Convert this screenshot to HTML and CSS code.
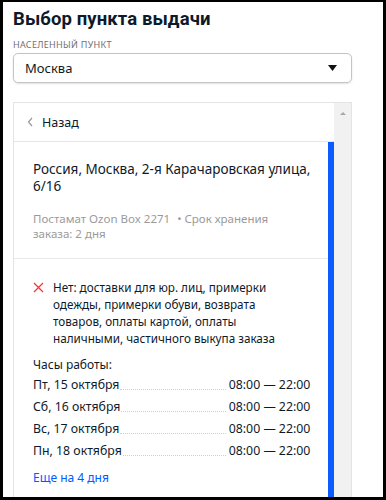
FILE: index.html
```html
<!DOCTYPE html>
<html lang="ru">
<head>
    <meta charset="UTF-8">
    <meta name="viewport" content="width=device-width, initial-scale=1.0">
    <title>Выбор пункта выдачи</title>
    <link rel="stylesheet" href="styles.css">
</head>
<body>
    <div class="page">
        <h1 class="title">Выбор пункта выдачи</h1>
        <div class="field-label">Населенный пункт</div>
        <div class="select">
            <span>Москва</span>
            <svg class="caret" width="9" height="6" viewBox="0 0 9 6"><path d="M0 0h9L4.5 6z" fill="#111"/></svg>
        </div>

        <div class="panel">
            <div class="panel-main">
                <div class="back">
                    <svg width="6" height="10" viewBox="0 0 6 10"><path d="M5 1L1.5 5 5 9" fill="none" stroke="#9a9a9a" stroke-width="1.2"/></svg>
                    <span>Назад</span>
                </div>

                <div class="section address">
                    <div class="addr">Россия, Москва, 2-я Карачаровская улица,<br>6/16</div>
                    <div class="meta">Постамат Ozon Box 2271 <span class="dot">•</span> Срок хранения<br>заказа: 2 дня</div>
                </div>

                <div class="section info">
                    <div class="no">
                        <svg width="11" height="11" viewBox="0 0 11 11"><path d="M1 1l9 9M10 1l-9 9" stroke="#f1373a" stroke-width="1.3"/></svg>
                        <p>Нет: доставки для юр. лиц, примерки<br>одежды, примерки обуви, возврата<br>товаров, оплаты картой, оплаты<br>наличными, частичного выкупа заказа</p>
                    </div>
                    <div class="hours-title">Часы работы:</div>
                    <div class="hours">
                        <div class="row"><span>Пт, 15 октября</span><i class="leader"></i><span>08:00 — 22:00</span></div>
                        <div class="row"><span>Сб, 16 октября</span><i class="leader"></i><span>08:00 — 22:00</span></div>
                        <div class="row"><span>Вс, 17 октября</span><i class="leader"></i><span>08:00 — 22:00</span></div>
                        <div class="row"><span>Пн, 18 октября</span><i class="leader"></i><span>08:00 — 22:00</span></div>
                    </div>
                    <a class="more" href="#">Еще на 4 дня</a>
                </div>
            </div>
            <div class="track"><span class="arrow"></span></div>
            <div class="thumb"></div>
        </div>
    </div>
</body>
</html>
```

FILE: styles.css
```css
html, body {
    margin: 0;
    height: 100%;
}
body {
    background: #000;
    padding: 2px 3px 3px 3px;
    box-sizing: border-box;
    font-family: 'Noto Sans', sans-serif;
    color: #0d1a2a;
}
.page {
    background: #fff;
    height: 100%;
    padding: 4px 0 0 10px;
    box-sizing: border-box;
    overflow: hidden;
}
.title {
    margin: 0;
    font-family: Roboto, sans-serif;
    font-size: 18.5px;
    line-height: 26px;
    font-weight: 700;
    letter-spacing: 0.1px;
}
.field-label {
    margin-top: 7px;
    font-size: 9px;
    line-height: 12px;
    text-transform: uppercase;
    letter-spacing: 0.3px;
    color: #707070;
}
.select {
    margin-top: 2px;
    width: 339px;
    height: 30px;
    box-sizing: border-box;
    border: 1px solid #c4c4c4;
    border-radius: 5px;
    box-shadow: 0 1px 2px rgba(0,0,0,0.12);
    display: flex;
    align-items: center;
    justify-content: space-between;
    padding: 0 14px 0 11px;
    font-size: 13px;
}
.panel {
    position: relative;
    margin-top: 19px;
    width: 339px;
    height: 400px;
    box-sizing: border-box;
    border: 1px solid #e4e4e4;
    display: flex;
}
.panel-main {
    flex: 1;
}
.back {
    height: 38px;
    display: flex;
    align-items: center;
    gap: 9px;
    padding-left: 13px;
    border-bottom: 1px solid #e4e4e4;
    font-size: 12.5px;
}
.section {
    padding: 0 24px 0 19px;
    white-space: nowrap;
}
.address {
    padding-top: 19px;
    padding-bottom: 17px;
    border-bottom: 1px solid #e8e8e8;
}
.addr {
    font-size: 13.5px;
    line-height: 17px;
}
.meta {
    margin-top: 16px;
    font-size: 11.5px;
    line-height: 15px;
    color: #9a9a9a;
}
.dot {
    margin-left: 4px;
}
.info {
    padding-top: 20px;
    font-size: 12px;
    line-height: 17px;
}
.no {
    display: flex;
    gap: 9px;
}
.no svg {
    margin-top: 3px;
    flex: none;
}
.no p {
    margin: 0;
    font-size: 11.7px;
}
.hours-title {
    margin-top: 9px;
}
.hours {
    margin-top: 1px;
}
.row {
    display: flex;
    align-items: flex-end;
    line-height: 22px;
    font-size: 12.3px;
}
.leader {
    flex: 1;
    border-bottom: 1px dotted #d0d0d0;
    margin: 0 3px 6px 1px;
}
.more {
    display: block;
    margin-top: 7px;
    color: #005bff;
    text-decoration: none;
}
.track {
    width: 19px;
    background: #f1f1f1;
    display: flex;
    justify-content: center;
}
.arrow {
    margin-top: 9px;
    width: 0;
    height: 0;
    border-left: 3px solid transparent;
    border-right: 3px solid transparent;
    border-bottom: 3px solid #a8a8a8;
}
.thumb {
    position: absolute;
    left: 314px;
    top: 39px;
    bottom: 0;
    width: 6px;
    background: #0b5cff;
}
```
